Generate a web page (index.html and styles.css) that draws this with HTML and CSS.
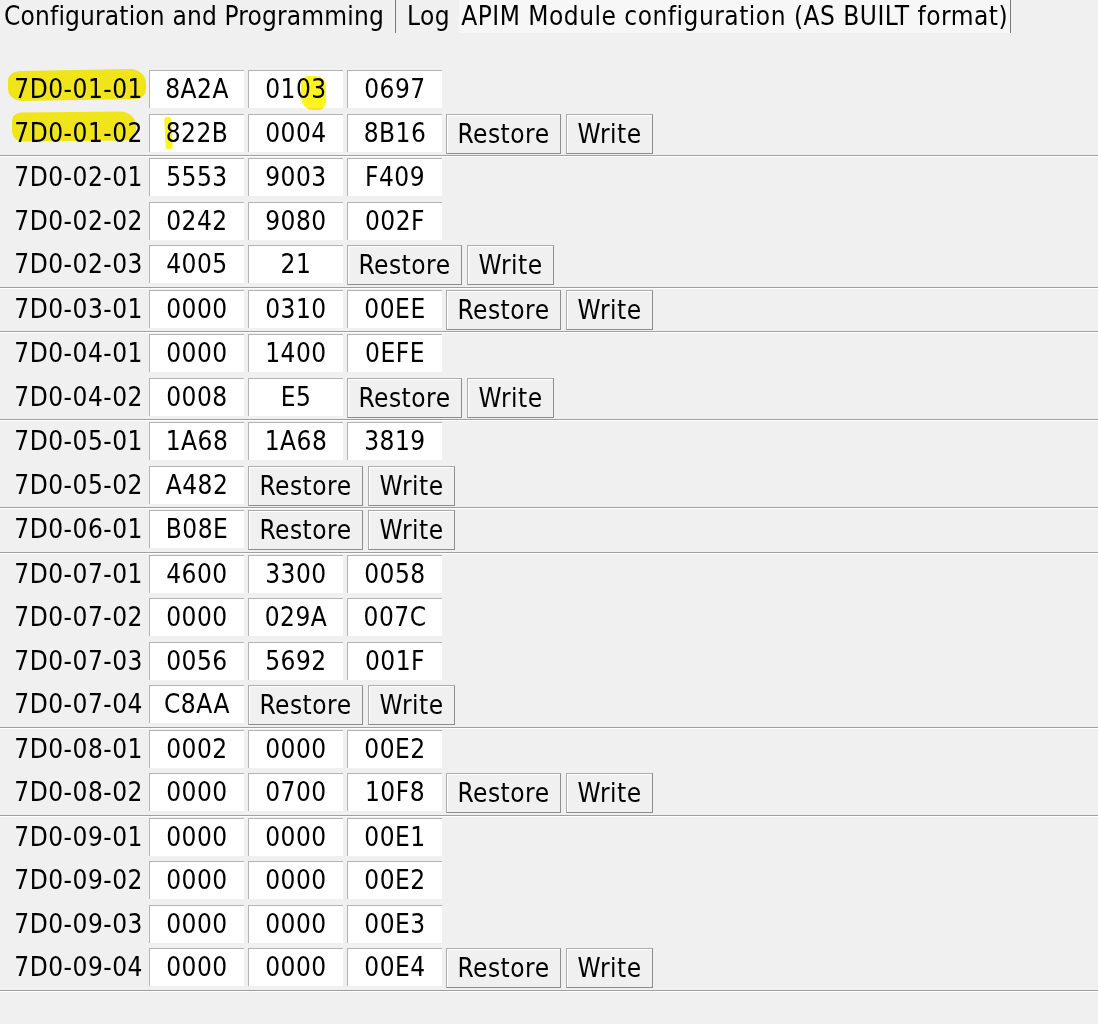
FILE: index.html
```html
<!DOCTYPE html>
<html>
<head>
<meta charset="utf-8">
<link rel="stylesheet" href="styles.css">
</head>
<body>
<div class="page">
  <div class="tabs">
    <div class="tab tab-first">Configuration and Programming</div>
    <div class="tab tab-log">Log</div>
    <div class="tab tab-active">APIM Module configuration (AS BUILT format)</div>
  </div>

  <div class="content">
    <div class="group">
      <div class="row"><div class="label">7D0-01-01</div><div class="cell">8A2A</div><div class="cell">0103</div><div class="cell">0697</div></div>
      <div class="row"><div class="label">7D0-01-02</div><div class="cell">822B</div><div class="cell">0004</div><div class="cell">8B16</div><div class="btn restore">Restore</div><div class="btn write">Write</div></div>
    </div>
    <div class="group">
      <div class="row"><div class="label">7D0-02-01</div><div class="cell">5553</div><div class="cell">9003</div><div class="cell">F409</div></div>
      <div class="row"><div class="label">7D0-02-02</div><div class="cell">0242</div><div class="cell">9080</div><div class="cell">002F</div></div>
      <div class="row"><div class="label">7D0-02-03</div><div class="cell">4005</div><div class="cell">21</div><div class="btn restore">Restore</div><div class="btn write">Write</div></div>
    </div>
    <div class="group">
      <div class="row"><div class="label">7D0-03-01</div><div class="cell">0000</div><div class="cell">0310</div><div class="cell">00EE</div><div class="btn restore">Restore</div><div class="btn write">Write</div></div>
    </div>
    <div class="group">
      <div class="row"><div class="label">7D0-04-01</div><div class="cell">0000</div><div class="cell">1400</div><div class="cell">0EFE</div></div>
      <div class="row"><div class="label">7D0-04-02</div><div class="cell">0008</div><div class="cell">E5</div><div class="btn restore">Restore</div><div class="btn write">Write</div></div>
    </div>
    <div class="group">
      <div class="row"><div class="label">7D0-05-01</div><div class="cell">1A68</div><div class="cell">1A68</div><div class="cell">3819</div></div>
      <div class="row"><div class="label">7D0-05-02</div><div class="cell">A482</div><div class="btn restore">Restore</div><div class="btn write">Write</div></div>
    </div>
    <div class="group">
      <div class="row"><div class="label">7D0-06-01</div><div class="cell">B08E</div><div class="btn restore">Restore</div><div class="btn write">Write</div></div>
    </div>
    <div class="group">
      <div class="row"><div class="label">7D0-07-01</div><div class="cell">4600</div><div class="cell">3300</div><div class="cell">0058</div></div>
      <div class="row"><div class="label">7D0-07-02</div><div class="cell">0000</div><div class="cell">029A</div><div class="cell">007C</div></div>
      <div class="row"><div class="label">7D0-07-03</div><div class="cell">0056</div><div class="cell">5692</div><div class="cell">001F</div></div>
      <div class="row"><div class="label">7D0-07-04</div><div class="cell">C8AA</div><div class="btn restore">Restore</div><div class="btn write">Write</div></div>
    </div>
    <div class="group">
      <div class="row"><div class="label">7D0-08-01</div><div class="cell">0002</div><div class="cell">0000</div><div class="cell">00E2</div></div>
      <div class="row"><div class="label">7D0-08-02</div><div class="cell">0000</div><div class="cell">0700</div><div class="cell">10F8</div><div class="btn restore">Restore</div><div class="btn write">Write</div></div>
    </div>
    <div class="group">
      <div class="row"><div class="label">7D0-09-01</div><div class="cell">0000</div><div class="cell">0000</div><div class="cell">00E1</div></div>
      <div class="row"><div class="label">7D0-09-02</div><div class="cell">0000</div><div class="cell">0000</div><div class="cell">00E2</div></div>
      <div class="row"><div class="label">7D0-09-03</div><div class="cell">0000</div><div class="cell">0000</div><div class="cell">00E3</div></div>
      <div class="row"><div class="label">7D0-09-04</div><div class="cell">0000</div><div class="cell">0000</div><div class="cell">00E4</div><div class="btn restore">Restore</div><div class="btn write">Write</div></div>
    </div>
  </div>

  <div class="hl hl-1"></div>
  <div class="hl hl-2"></div>
  <div class="hl hl-3"></div>
  <div class="hl hl-4"></div>
</div>
</body>
</html>
```

FILE: styles.css
```css
html, body {
  margin: 0;
  padding: 0;
  background: #f0f0f0;
}

.page {
  position: relative;
  width: 1098px;
  height: 1024px;
  overflow: hidden;
  font-family: "DejaVu Sans Condensed", "DejaVu Sans", sans-serif;
  font-size: 26px;
  letter-spacing: 0.5px;
  color: #000;
}

.tabs {
  display: flex;
  height: 33px;
  align-items: stretch;
}

.tab {
  line-height: 33px;
  white-space: nowrap;
}

.tab-first {
  letter-spacing: 0.17px;
  padding-left: 4px;
  padding-right: 11px;
  border-right: 1px solid #7a7a7a;
}

.tab-log {
  padding-left: 11px;
  padding-right: 9px;
}

.tab-active {
  background: #f7f7f7;
  padding-left: 2px;
  padding-right: 2px;
  border-right: 1px solid #7a7a7a;
}

.content {
  margin-top: 35px;
}

.group {
  border-bottom: 1px solid #a0a0a0;
  box-shadow: 0 1px 0 #ffffff;
}

.row {
  display: flex;
  align-items: flex-start;
  height: 43.5px;
  padding-top: 2px;
  box-sizing: border-box;
}

.label {
  width: 149px;
  box-sizing: border-box;
  padding-right: 6px;
  text-align: right;
  height: 38px;
  line-height: 38px;
}

.cell {
  width: 95px;
  height: 38px;
  box-sizing: border-box;
  margin-right: 4px;
  background: #ffffff;
  border-top: 1px solid #b4b4b4;
  border-left: 1px solid #b4b4b4;
  text-align: center;
  line-height: 37px;
}

.btn {
  height: 40px;
  box-sizing: border-box;
  background: #f0f0f0;
  border: 1px solid #acacac;
  border-right-color: #8c8c8c;
  border-bottom-color: #8c8c8c;
  box-shadow: inset 1px 1px 0 #ffffff;
  text-align: center;
  line-height: 38px;
}

.restore {
  width: 115px;
  margin-right: 5px;
}

.write {
  width: 87px;
}

.hl {
  position: absolute;
  background: #fff41c;
  mix-blend-mode: multiply;
}

.hl-1 {
  left: 8px;
  top: 70px;
  width: 138px;
  height: 30px;
  border-radius: 12px 16px 10px 14px / 10px 14px 10px 12px;
  transform: rotate(-1deg);
}

.hl-2 {
  left: 12px;
  top: 112px;
  width: 124px;
  height: 29px;
  border-radius: 10px 16px 12px 10px / 8px 14px 12px 10px;
  transform: rotate(-0.5deg);
}

.hl-3 {
  left: 301px;
  top: 76px;
  width: 25px;
  height: 34px;
  border-radius: 8px 10px 6px 12px / 8px 10px 10px 14px;
}

.hl-4 {
  left: 165px;
  top: 117px;
  width: 7px;
  height: 32px;
  border-radius: 3px;
  transform: rotate(-3deg);
}
```
